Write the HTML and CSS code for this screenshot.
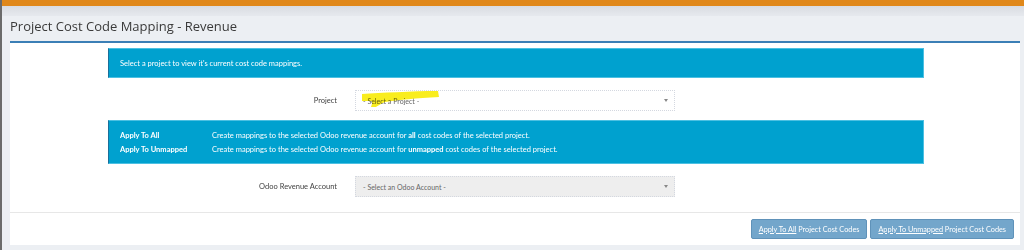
FILE: index.html
```html
<!DOCTYPE html>
<html lang="en">
<head>
    <meta charset="UTF-8">
    <meta name="viewport" content="width=device-width, initial-scale=1.0">
    <title>Project Cost Code Mapping - Revenue</title>
    <link rel="stylesheet" href="styles.css">
</head>
<body>
    <div class="frame">
        <div class="topbar"></div>
        <div class="subbar"></div>
        <h1 class="page-title">Project Cost Code Mapping - Revenue</h1>

        <div class="panel">
            <div class="panel-body">
                <div class="info-box info-single">
                    Select a project to view it's current cost code mappings.
                </div>

                <div class="form-row">
                    <label class="form-label" for="project">Project</label>
                    <div class="select-wrap">
                        <div id="project" class="select">
                            <span>- Select a Project -</span>
                            <span class="caret"></span>
                        </div>
                        <!-- marker scribble over the placeholder -->
                        <svg class="highlight" width="80" height="18" viewBox="0 0 80 18">
                            <path d="M1 3 C 20 2, 50 0, 77 0 L 78 6 C 55 7, 38 9, 24 11 C 19 13, 17 15, 15 16 L 10 16 C 11 13, 12 11, 10 10 L 1 10 Z" fill="#f8eb00" opacity="0.88"/>
                        </svg>
                    </div>
                </div>

                <div class="info-box info-list">
                    <div class="info-line">
                        <span class="info-key">Apply To All</span>
                        <span>Create mappings to the selected Odoo revenue account for <b>all</b> cost codes of the selected project.</span>
                    </div>
                    <div class="info-line">
                        <span class="info-key">Apply To Unmapped</span>
                        <span>Create mappings to the selected Odoo revenue account for <b>unmapped</b> cost codes of the selected project.</span>
                    </div>
                </div>

                <div class="form-row">
                    <label class="form-label" for="account">Odoo Revenue Account</label>
                    <div class="select-wrap">
                        <div id="account" class="select select-disabled">
                            <span>- Select an Odoo Account -</span>
                            <span class="caret"></span>
                        </div>
                    </div>
                </div>
            </div>

            <div class="panel-footer">
                <button class="button" disabled><u>Apply To All</u> Project Cost Codes</button>
                <button class="button" disabled><u>Apply To Unmapped</u> Project Cost Codes</button>
            </div>
        </div>
    </div>
</body>
</html>
```

FILE: styles.css
```css
:root {
    --orange: #e0881a;
    --page-bg: #eceff3;
    --panel-border: #3b7fb6;
    --info-bg: #00a1cf;
    --info-edge: #1b6f9a;
    --button-bg: #73a6cb;
    --text: #444;
}

* {
    margin: 0;
    padding: 0;
    box-sizing: border-box;
}

body {
    background-color: var(--page-bg);
    font-family: Lato, "Open Sans", sans-serif;
    color: var(--text);
}

.frame {
    border-left: 2px solid #6b6b6b;
    height: 250px;
    overflow: hidden;
}

.topbar {
    height: 6px;
    background: var(--orange);
}

.subbar {
    height: 10px;
    background: linear-gradient(#d9dce1, #e6e9ee);
}

.page-title {
    height: 25px;
    padding-left: 8px;
    font-family: "Open Sans", sans-serif;
    font-weight: 400;
    font-size: 13px;
    line-height: 20px;
    color: #3a3a3a;
}

.panel {
    margin: 0 4px 0 8px;
    background: white;
    border-top: 2px solid var(--panel-border);
}

.panel-body {
    padding: 5px 96px 0 98px;
}

.info-box {
    background: var(--info-bg);
    border: 1px solid #4cc0e2;
    border-left: 1px solid var(--info-edge);
    color: white;
    font-size: 7.5px;
}

.info-single {
    height: 30px;
    padding: 0 11px;
    display: flex;
    align-items: center;
}

.info-list {
    height: 44px;
    padding: 7px 11px;
    display: flex;
    flex-direction: column;
    justify-content: center;
    gap: 5px;
}

.info-line {
    display: flex;
}

.info-key {
    width: 92px;
    font-weight: 700;
}

.form-row {
    display: flex;
    align-items: center;
    gap: 18px;
    margin: 12px 0 9px;
}

.form-row:last-child {
    margin-bottom: 15px;
}

.form-label {
    width: 229px;
    text-align: right;
    font-size: 7.5px;
    color: #444;
}

.select-wrap {
    position: relative;
}

.select {
    width: 320px;
    height: 21px;
    border: 1px dotted #d4d8e0;
    background: white;
    display: flex;
    align-items: center;
    justify-content: space-between;
    padding: 0 6px 0 7px;
    font-size: 7px;
    color: #666;
}

.select-disabled {
    background: #eeeeee;
}

.caret {
    width: 0;
    height: 0;
    border-left: 2.5px solid transparent;
    border-right: 2.5px solid transparent;
    border-top: 3px solid #888;
}

.highlight {
    position: absolute;
    left: 6px;
    top: 1px;
    pointer-events: none;
    mix-blend-mode: multiply;
}

.panel-footer {
    border-top: 1px solid #e7e7e7;
    display: flex;
    justify-content: flex-end;
    gap: 3px;
    padding: 6px 6px 6px;
}

.button {
    height: 20px;
    padding: 0 7px;
    background: var(--button-bg);
    border: 1px solid #5f92b9;
    border-radius: 2px;
    color: white;
    font-family: Lato, sans-serif;
    font-size: 7.3px;
}
```
